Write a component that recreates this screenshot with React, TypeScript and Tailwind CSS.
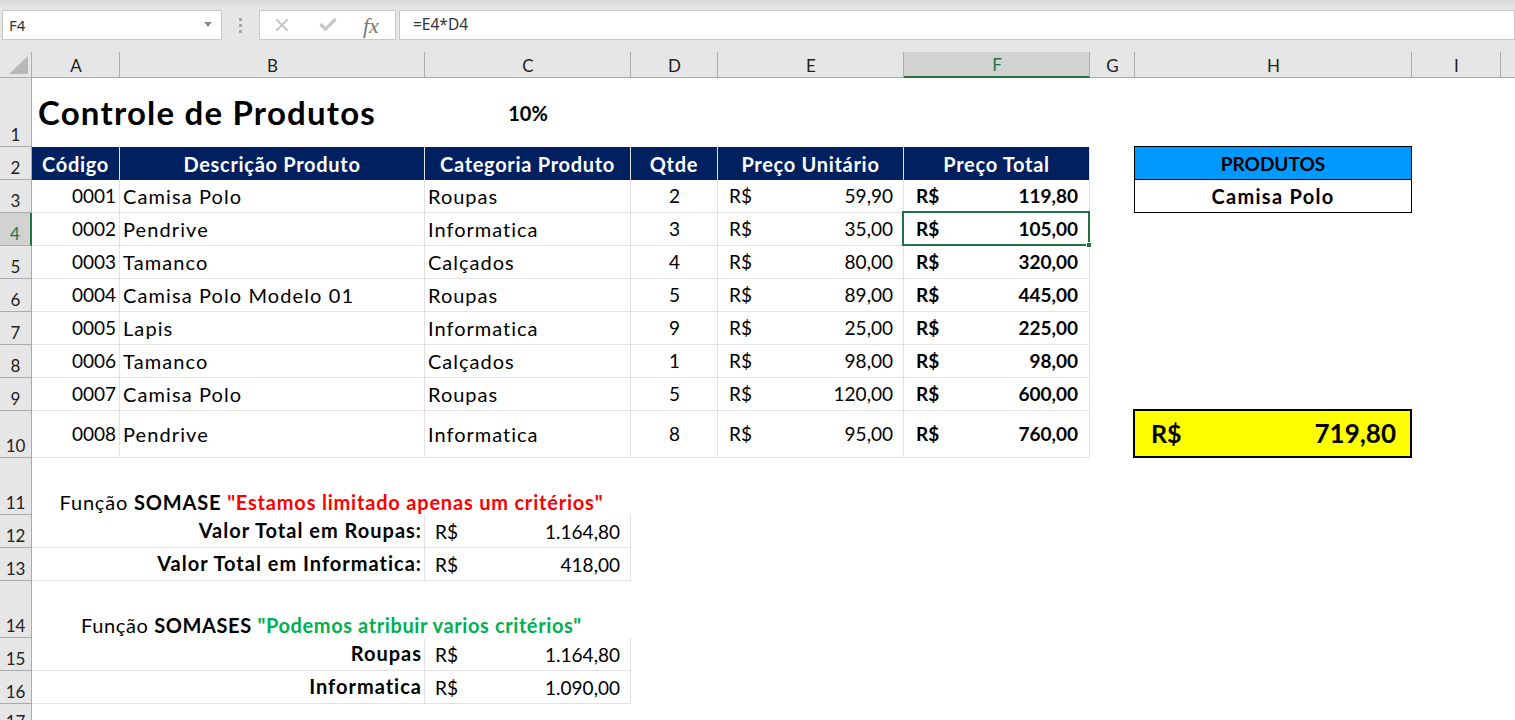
import React from "react";
import { X, Check } from "lucide-react";

const columns = ["A", "B", "C", "D", "E", "F", "G", "H", "I", ""];

const produtos = [
  { cod: "0001", desc: "Camisa Polo", cat: "Roupas", qtd: "2", preco: "59,90", total: "119,80" },
  { cod: "0002", desc: "Pendrive", cat: "Informatica", qtd: "3", preco: "35,00", total: "105,00" },
  { cod: "0003", desc: "Tamanco", cat: "Calçados", qtd: "4", preco: "80,00", total: "320,00" },
  { cod: "0004", desc: "Camisa Polo Modelo 01", cat: "Roupas", qtd: "5", preco: "89,00", total: "445,00" },
  { cod: "0005", desc: "Lapis", cat: "Informatica", qtd: "9", preco: "25,00", total: "225,00" },
  { cod: "0006", desc: "Tamanco", cat: "Calçados", qtd: "1", preco: "98,00", total: "98,00" },
  { cod: "0007", desc: "Camisa Polo", cat: "Roupas", qtd: "5", preco: "120,00", total: "600,00" },
  { cod: "0008", desc: "Pendrive", cat: "Informatica", qtd: "8", preco: "95,00", total: "760,00" },
];

const tableHead = ["Código", "Descrição Produto", "Categoria Produto", "Qtde", "Preço Unitário", "Preço Total"];

// row number cell on the left edge
const RowHead = ({ n, active }: { n: number; active?: boolean }) => (
  <div
    className={`flex items-end justify-center border-b border-r border-[#ababab] pb-[1px] text-[17px] leading-[20px] text-[#222] font-['Lato',sans-serif] ${
      active ? "bg-[#d2d2d2] border-r-2 border-r-[#217346] text-[#217346]" : "bg-[#e6e6e6]"
    }`}
  >
    {n}
  </div>
);

const Gap = () => <div className="col-span-7" />;

const SumRow = ({ n, label, value }: { n: number; label: string; value: string }) => (
  <>
    <RowHead n={n} />
    <div className="col-span-2 flex items-center justify-end border-b border-r border-[#e2e2e2] pr-[2px] pb-[2px] text-[20px] font-bold tracking-[1px]">
      {label}
    </div>
    <div className="flex items-center justify-between border-b border-r border-[#e2e2e2] pl-[10px] pr-[10px] pt-[2px]">
      <span>R$</span>
      <span>{value}</span>
    </div>
    <div className="col-span-7" />
  </>
);

export default function App() {
  return (
    <div className="h-[720px] w-[1515px] overflow-hidden bg-white text-[19px] text-black font-['Lato',sans-serif]">
      {/* barra de formula */}
      <div className="flex h-[52px] items-start bg-[linear-gradient(#d9d9d9,#e6e6e6_8px)] pt-[10px] pl-[2px]">
        <div className="flex h-[30px] w-[220px] items-center justify-between border border-[#c8c8c8] bg-white px-[6px] text-[15px] text-[#333] font-['Noto_Sans',sans-serif]">
          <span>F4</span>
          <svg width="10" height="6" viewBox="0 0 10 6" className="mr-[2px]">
            <polygon points="1,0 9,0 5,5" fill="#8a8a8a" />
          </svg>
        </div>
        <div className="flex h-[30px] w-[37px] flex-col items-center justify-center gap-[3px]">
          <span className="h-[3px] w-[3px] bg-[#a8a8a8]" />
          <span className="h-[3px] w-[3px] bg-[#a8a8a8]" />
          <span className="h-[3px] w-[3px] bg-[#a8a8a8]" />
        </div>
        <div className="flex h-[30px] w-[137px] items-center border border-[#c8c8c8] bg-white pl-[12px]">
          <X size={20} className="text-[#c8c8c8]" strokeWidth={2.5} />
          <Check size={20} className="ml-[26px] text-[#c8c8c8]" strokeWidth={4} />
          <span className="ml-[25px] text-[22px] italic text-[#777] font-['Liberation_Serif',serif]">fx</span>
        </div>
        <div className="ml-[3px] flex h-[30px] flex-1 items-center border border-[#c8c8c8] bg-white pl-[13px] text-[15.5px] text-[#333] font-['Noto_Sans',sans-serif]">
          =E4*D4
        </div>
      </div>

      {/* planilha */}
      <div className="relative grid grid-cols-[32px_88px_305px_206px_87px_186px_186px_45px_277px_89px_15px] grid-rows-[26px_69px_33px_33px_33px_33px_33px_33px_33px_33px_47px_57px_33px_33px_57px_33px_33px_30px]">
        {/* cabecalho das colunas */}
        <div className="flex items-end justify-end border-b border-r border-[#ababab] bg-[#e6e6e6] p-[3px]">
          <svg width="19" height="18" viewBox="0 0 19 18">
            <polygon points="19,0 19,18 0,18" fill="#b8b8b8" />
          </svg>
        </div>
        {columns.map((c) => (
          <div
            key={c}
            className={`flex items-center justify-center border-b border-r border-[#ababab] pl-px pt-[2px] text-[17px] text-[#222] ${
              c === "F" ? "border-b-2 border-b-[#217346] bg-[#d2d2d2] text-[#217346]" : "bg-[#e6e6e6]"
            }`}
          >
            {c}
          </div>
        ))}

        {/* linha 1 */}
        <RowHead n={1} />
        <div className="col-span-2 flex items-center pl-[6px] text-[33px] font-bold tracking-[1.2px] whitespace-nowrap">
          Controle de Produtos
        </div>
        <div className="flex items-center justify-center text-[20px] font-bold">10%</div>
        <div className="col-span-7" />

        {/* linha 2 */}
        <RowHead n={2} />
        {tableHead.map((h) => (
          <div
            key={h}
            className="flex items-center justify-center border-r border-[#e2e2e2] bg-[#002060] text-[20px] font-bold tracking-[0.7px] text-white"
          >
            {h}
          </div>
        ))}
        <div />
        <div className="-ml-px -mt-px flex items-center justify-center border border-black bg-[#0099ff] pt-[2px] font-bold">
          PRODUTOS
        </div>
        <div className="col-span-2" />

        {/* linhas de produtos */}
        {produtos.map((p, i) => (
          <React.Fragment key={p.cod}>
            <RowHead n={i + 3} active={i === 1} />
            <div className="flex items-center justify-end border-b border-r border-[#e2e2e2] pr-[3px] pt-[1px]">{p.cod}</div>
            <div className="flex items-center border-b border-r border-[#e2e2e2] pl-[3px] text-[20px] tracking-[1.1px]">{p.desc}</div>
            <div className="flex items-center border-b border-r border-[#e2e2e2] pl-[3px] text-[20px] tracking-[1px]">{p.cat}</div>
            <div className="flex items-center justify-center border-b border-r border-[#e2e2e2] pl-px pt-[1px]">{p.qtd}</div>
            <div className="flex items-center justify-between border-b border-r border-[#e2e2e2] pl-[11px] pr-[10px] pt-[1px]">
              <span>R$</span>
              <span>{p.preco}</span>
            </div>
            <div className="flex items-center justify-between border-b border-r border-[#e2e2e2] pl-[12px] pr-[11px] pt-[1px] font-bold">
              <span>R$</span>
              <span>{p.total}</span>
            </div>
            <div />
            {i === 0 ? (
              <div className="-ml-px -mt-px flex items-center justify-center border border-black text-[20px] font-bold tracking-[1.3px]">
                Camisa Polo
              </div>
            ) : i === 7 ? (
              <div className="-ml-[2px] -mt-[2px] flex items-center justify-between border-2 border-black bg-[#ffff00] pl-[16px] pr-[14px] font-bold">
                <span className="text-[25px]">R$</span>
                <span className="text-[26px]">719,80</span>
              </div>
            ) : (
              <div />
            )}
            <div className="col-span-2" />
          </React.Fragment>
        ))}

        {/* SOMASE */}
        <RowHead n={11} />
        <div className="col-span-3 flex items-end justify-center whitespace-nowrap text-[20px] leading-[26px] tracking-[0.8px]">
          <span>
            Função <b>SOMASE</b> <b className="text-[#ff0000]">"Estamos limitado apenas um critérios"</b>
          </span>
        </div>
        <Gap />
        <SumRow n={12} label="Valor Total em Roupas:" value="1.164,80" />
        <SumRow n={13} label="Valor Total em Informatica:" value="418,00" />

        {/* SOMASES */}
        <RowHead n={14} />
        <div className="col-span-3 flex items-end justify-center whitespace-nowrap text-[20px] leading-[26px] tracking-[0.6px]">
          <span>
            Função <b>SOMASES</b> <b className="text-[#00b050]">"Podemos atribuir varios critérios"</b>
          </span>
        </div>
        <Gap />
        <SumRow n={15} label="Roupas" value="1.164,80" />
        <SumRow n={16} label="Informatica" value="1.090,00" />

        <RowHead n={17} />

        {/* celula selecionada F4 */}
        <div className="pointer-events-none absolute left-[902px] top-[159px] h-[35px] w-[188px] border-2 border-[#217346]">
          <span className="absolute -bottom-[4px] -right-[4px] h-[6px] w-[6px] border border-white bg-[#217346]" />
        </div>
      </div>
    </div>
  );
}
